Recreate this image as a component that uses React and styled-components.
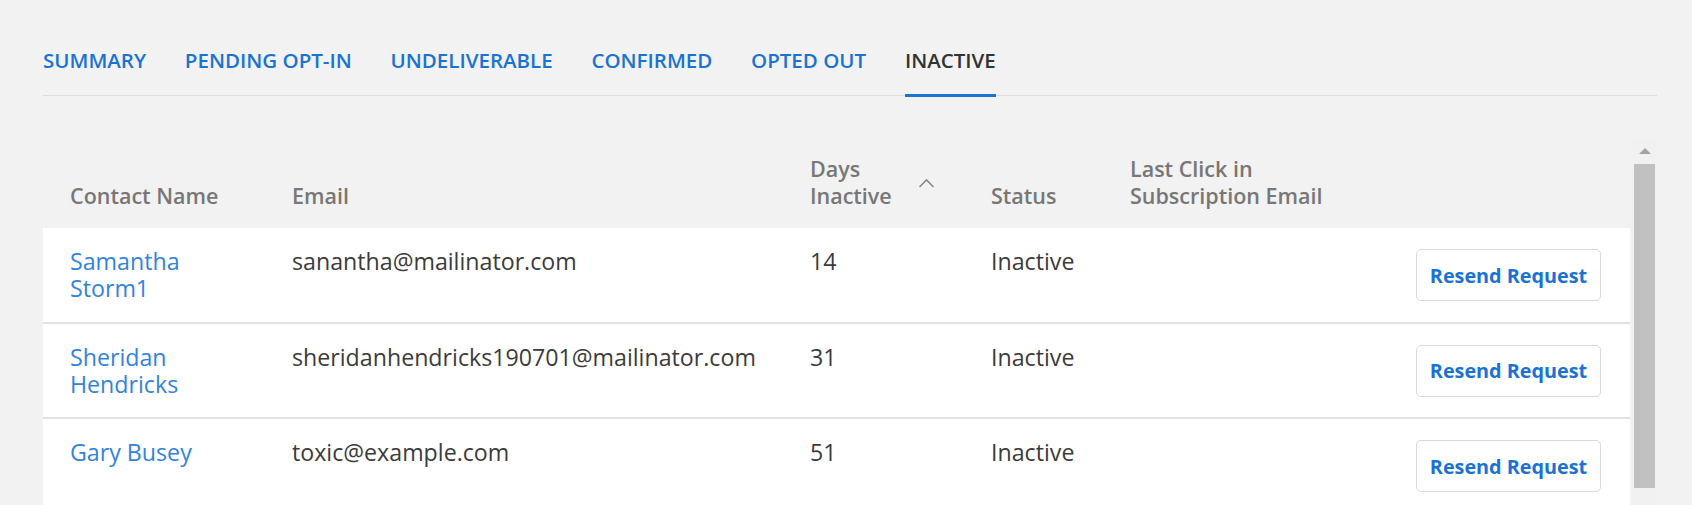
import React from "react";
import styled, { createGlobalStyle } from "styled-components";

const GlobalStyle = createGlobalStyle`
  html, body { margin: 0; padding: 0; background: #f2f2f2; }
  body { font-family: "Open Sans", "Noto Sans", sans-serif; overflow: hidden; }
`;

const Page = styled.div`
  padding: 48px 35px 0 43px;
  background: #f2f2f2;
  min-height: 505px;
  box-sizing: border-box;
`;

const TabList = styled.nav`
  display: flex;
  gap: 38.8px;
  border-bottom: 1px solid #dcdcdc;
`;

const Tab = styled.a`
  display: block;
  font-size: 20.5px;
  line-height: 24px;
  font-weight: 600;
  text-transform: uppercase;
  color: ${(p) => (p.$active ? "#333333" : "#1a73d4")};
  padding-bottom: 22px;
  margin-bottom: -2px;
  border-bottom: 3px solid ${(p) => (p.$active ? "#1a73d4" : "transparent")};
  cursor: pointer;
  white-space: nowrap;
`;

const ScrollArea = styled.div`
  margin-top: 41px;
  display: flex;
  gap: 2px;
  align-items: flex-start;
`;

const Table = styled.table`
  flex: 1;
  border-collapse: collapse;
  table-layout: fixed;
  width: 1587px;
`;

const HeadCell = styled.th`
  text-align: left;
  vertical-align: bottom;
  font-size: 21.5px;
  line-height: 26.5px;
  font-weight: 600;
  color: #777777;
  padding: 18px 27px 19px;
  height: 54px;
`;

const SortWrap = styled.div`
  display: flex;
  align-items: center;
`;

const Caret = styled.svg`
  margin-left: 26px;
  flex-shrink: 0;
`;

const Row = styled.tr`
  background: #ffffff;
  border-bottom: 2px solid #e2e2e2;
`;

const Cell = styled.td`
  vertical-align: top;
  font-size: 23.2px;
  line-height: 27px;
  color: #3b3b3b;
  padding: 20px 27px 19.5px;
  padding-right: ${(p) => (p.$right ? "29px" : "27px")};
`;

const NameLink = styled.a`
  color: #3283dc;
  text-decoration: none;
  cursor: pointer;
`;

const ResendButton = styled.button`
  display: block;
  margin: 1px 0 0 auto;
  width: 185px;
  height: 52px;
  background: #ffffff;
  border: 1px solid #d9d9d9;
  border-radius: 5px;
  font-family: "Open Sans", "Noto Sans", sans-serif;
  font-size: 19.8px;
  font-weight: 700;
  color: #1a73d4;
  cursor: pointer;
  padding: 0;
  white-space: nowrap;
`;

const Track = styled.div`
  width: 25px;
  height: 420px;
  background: #f1f1f1;
  display: flex;
  flex-direction: column;
  align-items: center;
  flex-shrink: 0;
`;

const ArrowUp = styled.div`
  margin-top: 11px;
  width: 0;
  height: 0;
  border-left: 6px solid transparent;
  border-right: 6px solid transparent;
  border-bottom: 6px solid #a3a3a3;
`;

const Thumb = styled.div`
  margin-top: 10px;
  width: 21px;
  height: 324px;
  background: #c1c1c1;
`;

const tabs = ["Summary", "Pending Opt-in", "Undeliverable", "Confirmed", "Opted Out", "Inactive"];

const rows = [
  { name: "Samantha Storm1", email: "sanantha@mailinator.com", days: 14 },
  { name: "Sheridan Hendricks", email: "sheridanhendricks190701@mailinator.com", days: 31 },
  { name: "Gary Busey", email: "toxic@example.com", days: 51 },
];

export default function App() {
  return (
    <Page>
      <GlobalStyle />
      <TabList>
        {tabs.map((t) => (
          <Tab key={t} $active={t === "Inactive"}>
            {t}
          </Tab>
        ))}
      </TabList>
      <ScrollArea>
        <Table>
          <colgroup>
            <col style={{ width: 222 }} />
            <col style={{ width: 518 }} />
            <col style={{ width: 181 }} />
            <col style={{ width: 139 }} />
            <col style={{ width: 269 }} />
            <col />
          </colgroup>
          <thead>
            <tr>
              <HeadCell>Contact Name</HeadCell>
              <HeadCell>Email</HeadCell>
              <HeadCell>
                <SortWrap>
                  <span>
                    Days
                    <br />
                    Inactive
                  </span>
                  <Caret width="17" height="10" viewBox="0 0 17 10">
                    <path d="M1.5 9 L8.5 2 L15.5 9" fill="none" stroke="#8a8a8a" strokeWidth="1.6" />
                  </Caret>
                </SortWrap>
              </HeadCell>
              <HeadCell>Status</HeadCell>
              <HeadCell>
                Last Click in
                <br />
                Subscription Email
              </HeadCell>
              <HeadCell />
            </tr>
          </thead>
          <tbody>
            {rows.map((r) => (
              <Row key={r.email}>
                <Cell>
                  <NameLink>{r.name}</NameLink>
                </Cell>
                <Cell>{r.email}</Cell>
                <Cell>{r.days}</Cell>
                <Cell>Inactive</Cell>
                <Cell />
                <Cell $right>
                  <ResendButton>Resend Request</ResendButton>
                </Cell>
              </Row>
            ))}
          </tbody>
        </Table>
        <Track>
          <ArrowUp />
          <Thumb />
        </Track>
      </ScrollArea>
    </Page>
  );
}
